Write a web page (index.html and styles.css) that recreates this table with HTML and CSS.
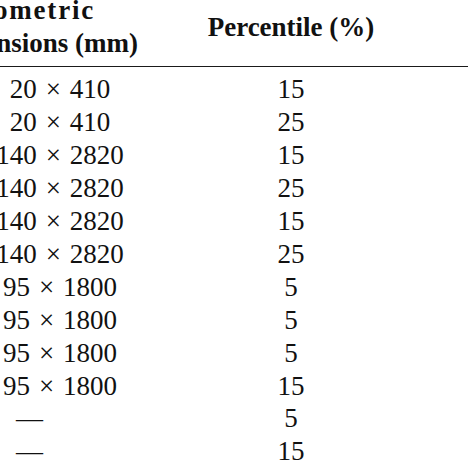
FILE: index.html
```html
<!DOCTYPE html>
<html>
<head>
<meta charset="utf-8">
<link rel="stylesheet" href="styles.css">
</head>
<body>
<div class="table">
  <div class="row head">
    <div class="cell c1 hcell"><span class="hl1">Geometric</span><span class="hl2">Dimensions (mm)</span></div>
    <div class="cell c2 hcell">Percentile (%)</div>
  </div>
  <div class="body">
    <div class="row"><div class="cell c1">20<span class="x">×</span>410</div><div class="cell c2">15</div></div>
    <div class="row"><div class="cell c1">20<span class="x">×</span>410</div><div class="cell c2">25</div></div>
    <div class="row"><div class="cell c1">140<span class="x">×</span>2820</div><div class="cell c2">15</div></div>
    <div class="row"><div class="cell c1">140<span class="x">×</span>2820</div><div class="cell c2">25</div></div>
    <div class="row"><div class="cell c1">140<span class="x">×</span>2820</div><div class="cell c2">15</div></div>
    <div class="row"><div class="cell c1">140<span class="x">×</span>2820</div><div class="cell c2">25</div></div>
    <div class="row"><div class="cell c1">95<span class="x">×</span>1800</div><div class="cell c2">5</div></div>
    <div class="row"><div class="cell c1">95<span class="x">×</span>1800</div><div class="cell c2">5</div></div>
    <div class="row"><div class="cell c1">95<span class="x">×</span>1800</div><div class="cell c2">5</div></div>
    <div class="row"><div class="cell c1">95<span class="x">×</span>1800</div><div class="cell c2">15</div></div>
    <div class="row"><div class="cell c1 dash">—</div><div class="cell c2">5</div></div>
    <div class="row"><div class="cell c1 dash">—</div><div class="cell c2">15</div></div>
  </div>
</div>
</body>
</html>
```
FILE: styles.css
```css
html, body {
  margin: 0;
  padding: 0;
  background: #ffffff;
  overflow: hidden;
}
body {
  width: 468px;
  height: 468px;
}
.table {
  margin-left: -40px;
  margin-top: -6px;
  width: 508px;
  font-family: "Liberation Serif", "Times New Roman", serif;
  font-size: 27px;
  color: #111111;
}
.row {
  display: grid;
  grid-template-columns: 200px 262px 1fr;
  line-height: 32.9px;
}
.cell {
  text-align: center;
  white-space: nowrap;
}
.x {
  margin: 0 9px;
}
.head {
  font-weight: bold;
  line-height: 33px;
  padding-bottom: 6px;
  border-bottom: 1.5px solid #1a1a1a;
  align-items: center;
}
.head .c1 {
  display: flex;
  flex-direction: column;
  align-items: flex-end;
  min-width: 0;
}
.hl1, .hl2 {
  display: block;
  flex: none;
}
.hl1 {
  letter-spacing: 1.8px;
  margin-right: 65px;
}
.hl2 {
  margin-right: 22px;
}
.body {
  padding-top: 6.4px;
}
.dash {
  padding-right: 61px;
}
```
